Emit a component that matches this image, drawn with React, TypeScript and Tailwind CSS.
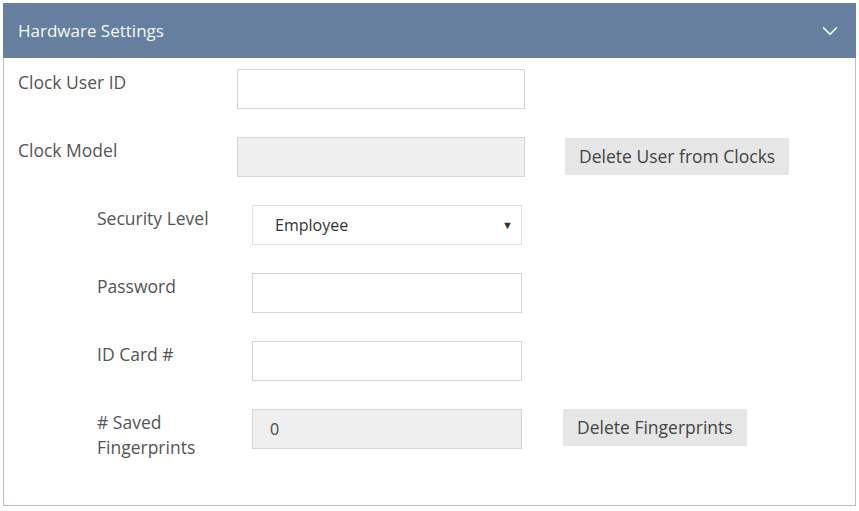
import { ChevronDown } from 'lucide-react'

function Label({ children, indent }: { children: React.ReactNode; indent?: boolean }) {
  return (
    <div className={`${indent ? 'w-[234px] pl-[79px]' : 'w-[219px]'} shrink-0 pt-[1px] leading-[25px] text-[17.5px] text-[#555]`}>
      {children}
    </div>
  )
}

export default function App() {
  return (
    <div className="w-[859px] h-[511px] bg-white pt-[3px] pl-[3px] font-['Open_Sans',sans-serif]">
      <div className="w-[853px] h-[503px] border border-[#b4c0d0]">
        <div className="h-[55px] -mx-px -mt-px bg-[#667f9e] flex items-center justify-between pl-[15px] pr-[13px]">
          <span className="text-white text-[17px] opacity-95">Hardware Settings</span>
          <ChevronDown size={26} strokeWidth={1.5} className="text-white" />
        </div>

        <div className="pl-[14px] pt-[11px] flex flex-col gap-[28px]">
          <div className="flex items-start h-[40px]">
            <Label>Clock User ID</Label>
            <input className="w-[288px] h-[40px] border border-[#d5d5d5] bg-white outline-none" />
          </div>

          <div className="flex items-start h-[40px]">
            <Label>Clock Model</Label>
            <input disabled className="w-[288px] h-[40px] border border-[#d5d5d5] bg-[#efefef] outline-none" />
            <button className="ml-[40px] mt-[1px] h-[37px] px-[14px] bg-[#e6e6e6] text-[17.5px] text-[#444]">
              Delete User from Clocks
            </button>
          </div>

          <div className="flex items-start h-[40px]">
            <Label indent>Security Level</Label>
            <div className="w-[270px] h-[40px] border border-[#e0e0e0] bg-white flex items-center justify-between pl-[22px] pr-[8px]">
              <span className="text-[16px] text-[#333]">Employee</span>
              <span className="text-[11px] text-[#333]">▼</span>
            </div>
          </div>

          <div className="flex items-start h-[40px]">
            <Label indent>Password</Label>
            <input type="password" className="w-[270px] h-[40px] border border-[#d5d5d5] bg-white outline-none" />
          </div>

          <div className="flex items-start h-[40px]">
            <Label indent>ID Card #</Label>
            <input className="w-[270px] h-[40px] border border-[#d5d5d5] bg-white outline-none" />
          </div>

          <div className="flex items-start h-[40px]">
            <Label indent>
              # Saved
              <br />
              Fingerprints
            </Label>
            <div className="w-[270px] h-[40px] border border-[#d5d5d5] bg-[#efefef] flex items-center pl-[17px] text-[16px] text-[#444]">
              0
            </div>
            <button className="ml-[41px] h-[37px] px-[14px] bg-[#e6e6e6] text-[17.5px] text-[#444]">
              Delete Fingerprints
            </button>
          </div>
        </div>
      </div>
    </div>
  )
}
